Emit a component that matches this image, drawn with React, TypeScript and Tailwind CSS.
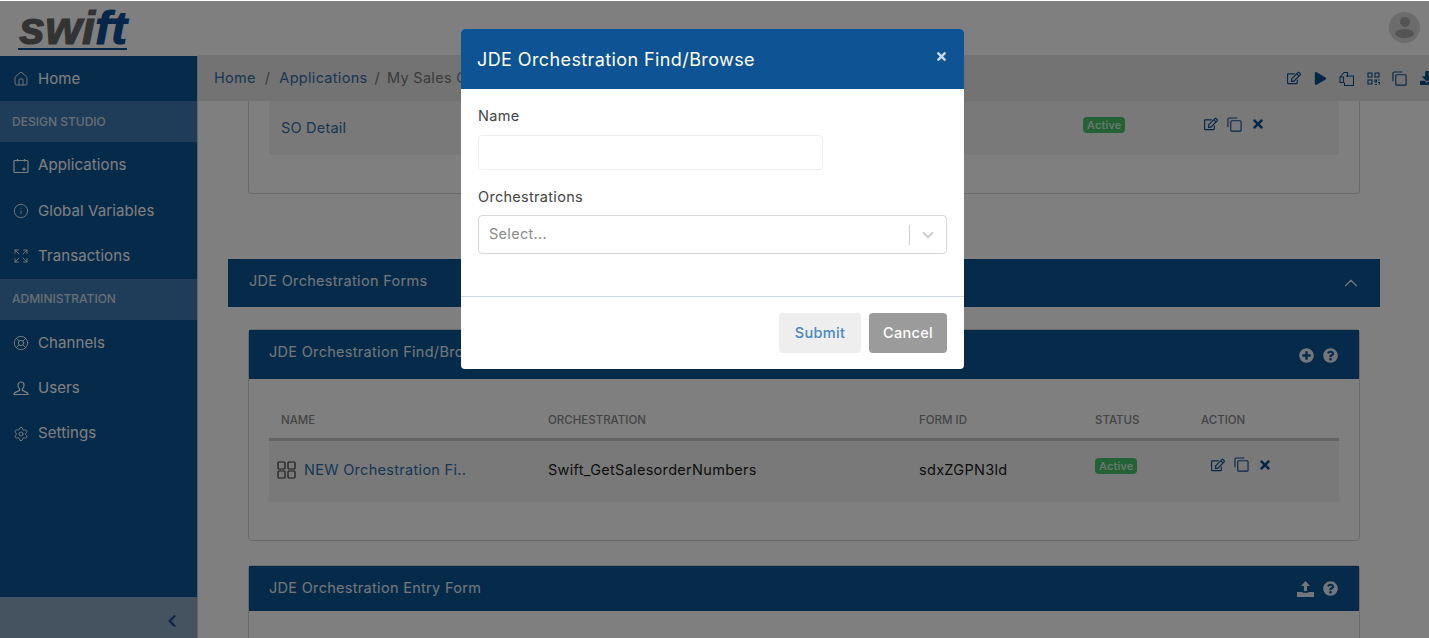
import { Home, Info, Expand, LifeBuoy, Settings, ChevronUp, ChevronDown } from "lucide-react";
import { FaRegEdit, FaPlay, FaTimes, FaPlusCircle, FaQuestionCircle, FaDownload, FaChevronLeft } from "react-icons/fa";

const font = { fontFamily: '"Inter", "Noto Sans", sans-serif' };

function CopyIcon({ size = 16 }: { size?: number }) {
  return (
    <svg width={size} height={size} viewBox="0 0 16 16" fill="none" stroke="currentColor" strokeWidth="1.2">
      <path d="M11 1H2.500A1.500 1.500 0 0 0 1 2.500V11" />
      <rect x="4" y="4" width="11" height="11" rx="1" />
    </svg>
  );
}

function RowActions() {
  return (
    <div className="flex items-center gap-[9px] text-[#0b4f8f]">
      <FaRegEdit size={14} />
      <CopyIcon size={15} />
      <FaTimes size={14} />
    </div>
  );
}

function AppIcon() {
  return (
    <svg width="16" height="16" viewBox="0 0 16 16" fill="none" stroke="currentColor" strokeWidth="1.200">
      <rect x="1" y="2.500" width="14" height="12" rx="1" />
      <path d="M4.500 1v2.500M11.500 1v2.500" />
      <circle cx="11" cy="11" r="1" />
    </svg>
  );
}

function UserIcon() {
  return (
    <svg width="16" height="16" viewBox="0 0 16 16" fill="none" stroke="currentColor" strokeWidth="1.200">
      <path d="M5 5a3 3 0 0 1 6 0c0 2-.8 3.200-1.600 4v1.400L14 12.600c.7.4 1 .8 1 1.900H1c0-1.100.3-1.500 1-1.900l4.600-2.200V9C5.800 8.200 5 7 5 5Z" />
    </svg>
  );
}

function QrIcon() {
  return (
    <svg width="13" height="13" viewBox="0 0 13 13" fill="none" stroke="currentColor" strokeWidth="1.100">
      <rect x="1" y="1" width="4" height="4" />
      <rect x="8" y="1" width="4" height="4" />
      <rect x="1" y="8" width="4" height="4" />
      <path d="M8 8h1.500v2H8zM11 8h1.500M11 10.500h1.500V12.500M8 12.500h2" />
    </svg>
  );
}

function PagesIcon() {
  return (
    <svg width="15" height="15" viewBox="0 0 15 15" fill="none" stroke="currentColor" strokeWidth="1.100">
      <path d="M1 6 5 1.500h3.500V6" />
      <path d="M1 6h3.500v5.500H1z" />
      <path d="M7 5h7.500v9.500H5.500v-3" />
    </svg>
  );
}

function GridIcon() {
  return (
    <svg width="19" height="18" viewBox="0 0 19 18" fill="none" stroke="currentColor" strokeWidth="1.200">
      <rect x="1" y="1" width="7" height="7" rx="1" />
      <rect x="11" y="1" width="7" height="7" rx="1" />
      <rect x="1" y="10" width="7" height="7" rx="1" />
      <rect x="11" y="10" width="7" height="7" rx="1" />
    </svg>
  );
}

function UploadIcon() {
  return (
    <svg width="17" height="16" viewBox="0 0 17 16" fill="currentColor">
      <path d="M8.500 0 13 5h-3v5H7V5H4z" />
      <path d="M0 11h5.500v.8h6V11H17v5H0z" />
    </svg>
  );
}

function NavItem({ icon, label }: { icon: React.ReactNode; label: string }) {
  return (
    <div className="flex h-[45.400px] items-center gap-[9px] pl-[13px] pt-[1px] text-white">
      <span className="flex w-[16px] justify-center [&>svg]:shrink-0">{icon}</span>
      <span className="text-[15px] tracking-[0.1px]">{label}</span>
    </div>
  );
}

function NavSection({ label }: { label: string }) {
  return (
    <div className="flex h-[41px] items-center bg-[#3f7bb0] pl-[12px] text-[12px] font-medium text-white/75">
      {label}
    </div>
  );
}

function Badge() {
  return (
    <span className="rounded-[4px] bg-[#45c46b] px-[4px] py-[1px] text-[11px] leading-[13px] font-medium tracking-[0.2px] text-white/80">
      Active
    </span>
  );
}

function CardHeader({ title, h, titleClass, children }: { title: string; h: string; titleClass: string; children: React.ReactNode }) {
  return (
    <div className={`flex ${h} items-center justify-between bg-[#0b5494] pl-[20px] pr-[21px] text-[14.500px] tracking-[0.3px] text-white/90`}>
      <span className={titleClass}>{title}</span>
      {children}
    </div>
  );
}

export default function App() {
  return (
    <div style={font} className="relative flex h-[638px] w-[1429px] flex-col overflow-hidden bg-white text-[#1a1a1a]">
      <header className="flex h-[55px] shrink-0 items-center justify-between pl-[19px] pr-[9px]">
        <div className="relative h-[50px] w-[112px]">
          <div
            style={{ fontFamily: '"Liberation Sans", sans-serif' }}
            className="text-[47px] leading-[50px] font-bold tracking-[0.2px] text-[#666] italic [-webkit-text-stroke:1.2px]"
          >
            swi<span className="text-[#0d4d94]">ft</span>
          </div>
          <div className="mt-[-5px] ml-[-1px] h-[2px] w-[109px] bg-[#0d4d94]" />
        </div>
        <div className="flex h-[31px] w-[31px] flex-col items-center justify-center gap-[2px] rounded-full bg-[#d8d8d8]">
          <div className="h-[10px] w-[10px] rounded-full bg-[#a8a8a8]" />
          <div className="h-[9px] w-[19px] rounded-[50%] bg-[#a8a8a8]" />
        </div>
      </header>

      <div className="flex min-h-0 flex-1">
        <aside className="mt-[1px] flex w-[198px] shrink-0 flex-col border-r border-[#c8c8c8] bg-[#0b5494]">
          <NavItem icon={<Home size={16} strokeWidth={1.3} />} label="Home" />
          <NavSection label="DESIGN STUDIO" />
          <NavItem icon={<AppIcon />} label="Applications" />
          <NavItem icon={<Info size={16} strokeWidth={1.3} />} label="Global Variables" />
          <NavItem icon={<Expand size={16} strokeWidth={1.3} />} label="Transactions" />
          <NavSection label="ADMINISTRATION" />
          <NavItem icon={<LifeBuoy size={16} strokeWidth={1.3} />} label="Channels" />
          <NavItem icon={<UserIcon />} label="Users" />
          <NavItem icon={<Settings size={16} strokeWidth={1.3} />} label="Settings" />
          <div className="mt-auto flex h-[41px] items-center justify-end bg-[#8aa4be] pt-[7px] pr-[18px] text-[#1a4b85]">
            <FaChevronLeft size={14} />
          </div>
        </aside>

        <main className="flex min-w-0 flex-1 flex-col overflow-hidden">
          <div className="flex h-[46px] shrink-0 items-center justify-between bg-[#e6e6e6] pl-[16px] text-[14.500px] tracking-[0.3px] text-[#2f6fa8]">
            <div className="flex items-center">
              <span>Home</span>
              <span className="mx-[9px] text-[#777]">/</span>
              <span>Applications</span>
              <span className="mx-[7px] text-[#777]">/</span>
              <span className="text-[#777]">My Sales Order App</span>
            </div>
            <div className="flex w-[142px] shrink-0 items-center gap-[12.500px] overflow-hidden text-[#0b4f8f]">
              <FaRegEdit size={14} className="shrink-0" />
              <FaPlay size={13} className="shrink-0" />
              <span className="shrink-0"><PagesIcon /></span>
              <span className="shrink-0"><QrIcon /></span>
              <span className="shrink-0"><CopyIcon size={15} /></span>
              <FaDownload size={14} className="shrink-0" />
            </div>
          </div>

          <div className="ml-[50px] h-[93px] w-[1112px] shrink-0 rounded-b-[4px] border-x border-b border-[#d4d4d4] px-[20px]">
            <div className="grid h-[54px] grid-cols-[802px_121px_1fr] items-center bg-[#f3f3f3] pl-[12px] text-[14.500px] tracking-[0.2px] text-[#2f6fa8]">
              <span>SO Detail</span>
              <span className="-translate-y-[4px]"><Badge /></span>
              <span className="-translate-y-[4px]"><RowActions /></span>
            </div>
          </div>

          <div className="mt-[65px] ml-[30px] flex h-[48px] w-[1152px] shrink-0 items-center justify-between bg-[#0b5494] pl-[21px] pr-[18px] text-[14.500px] tracking-[0.3px] text-white/90">
            <span className="mb-[4px]">JDE Orchestration Forms</span>
            <ChevronUp size={22} strokeWidth={1.3} />
          </div>

          <section className="mt-[22px] ml-[50px] h-[212px] w-[1112px] shrink-0 rounded-[4px] border border-[#d4d4d4]">
            <CardHeader title="JDE Orchestration Find/Browse" h="h-[49px]" titleClass="mb-[6px]">
              <div className="mt-[2px] flex items-center gap-[9px]">
                <FaPlusCircle size={15} />
                <FaQuestionCircle size={15} />
              </div>
            </CardHeader>
            <div className="mx-[20px]">
              <div className="grid h-[62px] grid-cols-[267px_371px_176px_106px_1fr] items-end border-b-[3px] border-[#c4c8cc] px-[12px] pb-[9px] text-[11.500px] font-medium text-[#8a8a8a]">
                <span>NAME</span>
                <span>ORCHESTRATION</span>
                <span>FORM ID</span>
                <span>STATUS</span>
                <span>ACTION</span>
              </div>
              <div className="grid h-[61px] grid-cols-[267px_371px_176px_106px_1fr] items-center bg-[#f3f3f3] px-[12px] pb-[4px] text-[14.500px] tracking-[0.3px]">
                <span className="-ml-[4px] flex items-center gap-[8px] text-[#2f6fa8]">
                  <span className="text-[#333]"><GridIcon /></span>
                  NEW Orchestration Fi..
                </span>
                <span>Swift_GetSalesorderNumbers</span>
                <span>sdxZGPN3ld</span>
                <span className="-translate-y-[5px]"><Badge /></span>
                <span className="ml-[10px] -translate-y-[5px]"><RowActions /></span>
              </div>
            </div>
          </section>

          <section className="mt-[24px] ml-[50px] w-[1112px] flex-1 rounded-t-[4px] border-x border-t border-[#d4d4d4]">
            <CardHeader title="JDE Orchestration Entry Form" h="h-[45px]" titleClass="mb-[2px]">
              <div className="flex items-center gap-[9px]">
                <UploadIcon />
                <FaQuestionCircle size={15} />
              </div>
            </CardHeader>
          </section>
        </main>
      </div>

      <div className="absolute inset-x-0 top-[1px] bottom-0 bg-black/50" />

      <div className="absolute top-[29px] left-[461px] w-[503px] overflow-hidden rounded-[4px] bg-white">
        <div className="flex h-[60px] items-center justify-between bg-[#0e5394] pl-[16px] pr-[18px] text-white">
          <span className="text-[18px] tracking-[0.4px]">JDE Orchestration Find/Browse</span>
          <FaTimes size={13} className="-mr-[2px] -translate-y-[3px] text-[#c9d8e8]" />
        </div>
        <div className="h-[207px] px-[17px] pt-[17px] text-[14.500px] tracking-[0.3px] text-[#444]">
          <div className="leading-[20px]">Name</div>
          <div className="mt-[9px] h-[35px] w-[345px] rounded-[4px] border border-[#eeeeee]" />
          <div className="mt-[17px] leading-[20px]">Orchestrations</div>
          <div className="mt-[8px] flex h-[39px] items-center justify-between rounded-[4px] border border-[#d6d6d6] pl-[10px] pr-[9px] text-[#8a8a8a]">
            <span className="mb-[1px]">Select...</span>
            <div className="flex items-center">
              <div className="mr-[9px] h-[20px] w-px bg-[#cccccc]" />
              <ChevronDown size={18} strokeWidth={2.500} className="text-[#cccccc]" />
            </div>
          </div>
        </div>
        <div className="flex h-[73px] items-start justify-end gap-[8px] border-t border-[#cfd6dc] px-[17px] pt-[16px] text-[14.500px] font-medium tracking-[0.3px]">
          <div className="flex h-[40px] w-[82px] items-center justify-center rounded-[4px] bg-[#eeeeee] text-[#4a86c5]">Submit</div>
          <div className="flex h-[40px] w-[78px] items-center justify-center rounded-[4px] bg-[#9b9b9b] text-white">Cancel</div>
        </div>
      </div>
    </div>
  );
}
